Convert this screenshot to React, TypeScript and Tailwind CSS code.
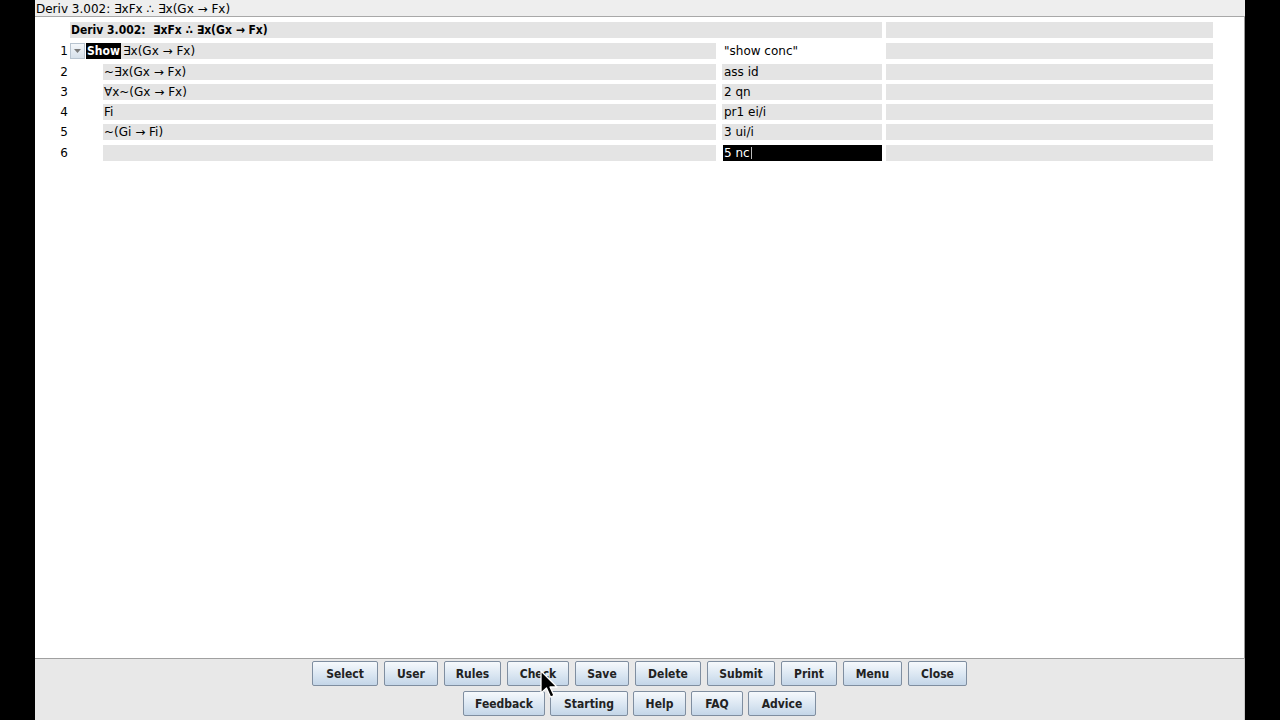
import React from "react";

const rows = [
  { n: "2", f: "~∃x(Gx → Fx)", j: "ass id", mt: "mt-[5px]" },
  { n: "3", f: "∀x~(Gx → Fx)", j: "2 qn", mt: "mt-[4px]" },
  { n: "4", f: "Fi", j: "pr1 ei/i", mt: "mt-[4px]" },
  { n: "5", f: "~(Gi → Fi)", j: "3 ui/i", mt: "mt-[4px]" },
];

const row1Buttons = [
  ["Select", 66],
  ["User", 54],
  ["Rules", 57],
  ["Check", 62],
  ["Save", 54],
  ["Delete", 66],
  ["Submit", 68],
  ["Print", 56],
  ["Menu", 59],
  ["Close", 59],
] as const;

const row2Buttons = [
  ["Feedback", 82],
  ["Starting", 78],
  ["Help", 53],
  ["FAQ", 52],
  ["Advice", 68],
] as const;

function Btn({ label, w }: { label: string; w: number }) {
  return (
    <div
      style={{ width: w }}
      className="h-[25px] flex items-center justify-center border border-[#7f8ea0] rounded-[2px] bg-gradient-to-b from-[#f6f9fc] via-[#dde8f3] to-[#c4d6e8] text-[12px] font-bold font-stretch-condensed text-[#222] [font-family:'DejaVu_Sans_Condensed','DejaVu_Sans',sans-serif]"
    >
      {label}
    </div>
  );
}

export default function App() {
  return (
    <div className="w-[1280px] h-[720px] bg-black overflow-hidden relative [font-family:'DejaVu_Sans',sans-serif]">
      <div className="ml-[35px] w-[1210px] h-[720px] flex flex-col">
        {/* title bar */}
        <div className="h-[17px] bg-[#eeeeee] border-b border-[#a8a8a8] flex items-center pl-[1px] pt-[1px] text-[12px] text-black leading-none">
          Deriv 3.002: ∃xFx ∴ ∃x(Gx → Fx)
        </div>
        {/* content */}
        <div className="flex-1 bg-white border-r border-[#9a9a9a] pt-[5px] flex flex-col text-[12px] text-black">
          {/* header */}
          <div className="flex h-[16px]">
            <div className="w-[35px]" />
            <div className="w-[812px] bg-[#e4e4e4] flex items-center pl-[1px] font-bold font-stretch-condensed [font-family:'DejaVu_Sans_Condensed','DejaVu_Sans',sans-serif]">
              <span className="whitespace-pre">Deriv 3.002:  ∃xFx ∴ ∃x(Gx → Fx)</span>
            </div>
            <div className="w-[4px]" />
            <div className="w-[327px] bg-[#e4e4e4]" />
          </div>
          {/* row 1 */}
          <div className="flex h-[16px] mt-[5px]">
            <div className="w-[35px] flex items-center justify-end pr-[2px]">1</div>
            <div className="w-[15px] bg-gradient-to-b from-[#f4f7fa] to-[#d6e0ea] border border-[#b8c4d0] flex items-center justify-center">
              <svg width="7" height="4" viewBox="0 0 7 4">
                <polygon points="0,0 7,0 3.5,4" fill="#7a7a7a" />
              </svg>
            </div>
            <div className="w-[1px]" />
            <div className="w-[35px] bg-black text-white font-bold font-stretch-condensed flex items-center pl-[1px] [font-family:'DejaVu_Sans_Condensed','DejaVu_Sans',sans-serif]">
              Show
            </div>
            <div className="w-[595px] bg-[#e4e4e4] flex items-center pl-[2px]">∃x(Gx → Fx)</div>
            <div className="w-[4px]" />
            <div className="w-[162px] bg-white flex items-center pl-[4px]">"show conc"</div>
            <div className="w-[4px]" />
            <div className="w-[327px] bg-[#e4e4e4]" />
          </div>
          {rows.map((r) => (
            <div key={r.n} className={`flex h-[16px] ${r.mt}`}>
              <div className="w-[35px] flex items-center justify-end pr-[2px]">{r.n}</div>
              <div className="w-[33px]" />
              <div className="w-[613px] bg-[#e4e4e4] flex items-center pl-[1px]">{r.f}</div>
              <div className="w-[6px]" />
              <div className="w-[160px] bg-[#e4e4e4] flex items-center pl-[2px]">{r.j}</div>
              <div className="w-[4px]" />
              <div className="w-[327px] bg-[#e4e4e4]" />
            </div>
          ))}
          {/* row 6 */}
          <div className="flex h-[16px] mt-[5px]">
            <div className="w-[35px] flex items-center justify-end pr-[2px]">6</div>
            <div className="w-[33px]" />
            <div className="w-[613px] bg-[#e4e4e4]" />
            <div className="w-[7px]" />
            <div className="w-[159px] bg-black text-white flex items-center pl-[1px]">
              5 nc<span className="inline-block w-[1px] h-[12px] bg-[#bbbbbb] ml-[1px]" />
            </div>
            <div className="w-[4px]" />
            <div className="w-[327px] bg-[#e4e4e4]" />
          </div>
        </div>
        {/* button panel */}
        <div className="h-[62px] bg-[#e8e8e8] border-t border-[#a0a0a0] border-r border-r-[#c8c8c8] flex flex-col items-center pt-[2px] gap-[5px]">
          <div className="flex gap-[6px]">
            {row1Buttons.map(([l, w]) => (
              <Btn key={l} label={l} w={w} />
            ))}
          </div>
          <div className="flex gap-[5px]">
            {row2Buttons.map(([l, w]) => (
              <Btn key={l} label={l} w={w} />
            ))}
          </div>
        </div>
      </div>
      {/* mouse cursor */}
      <svg className="absolute left-[540px] top-[670px]" width="20" height="30" viewBox="0 0 20 30">
        <path d="M1 1 L1 23 L6.5 18 L10.5 27 L14 25.5 L10 17 L17 17 Z" fill="black" stroke="white" strokeWidth="1.3" strokeLinejoin="round" />
      </svg>
    </div>
  );
}
